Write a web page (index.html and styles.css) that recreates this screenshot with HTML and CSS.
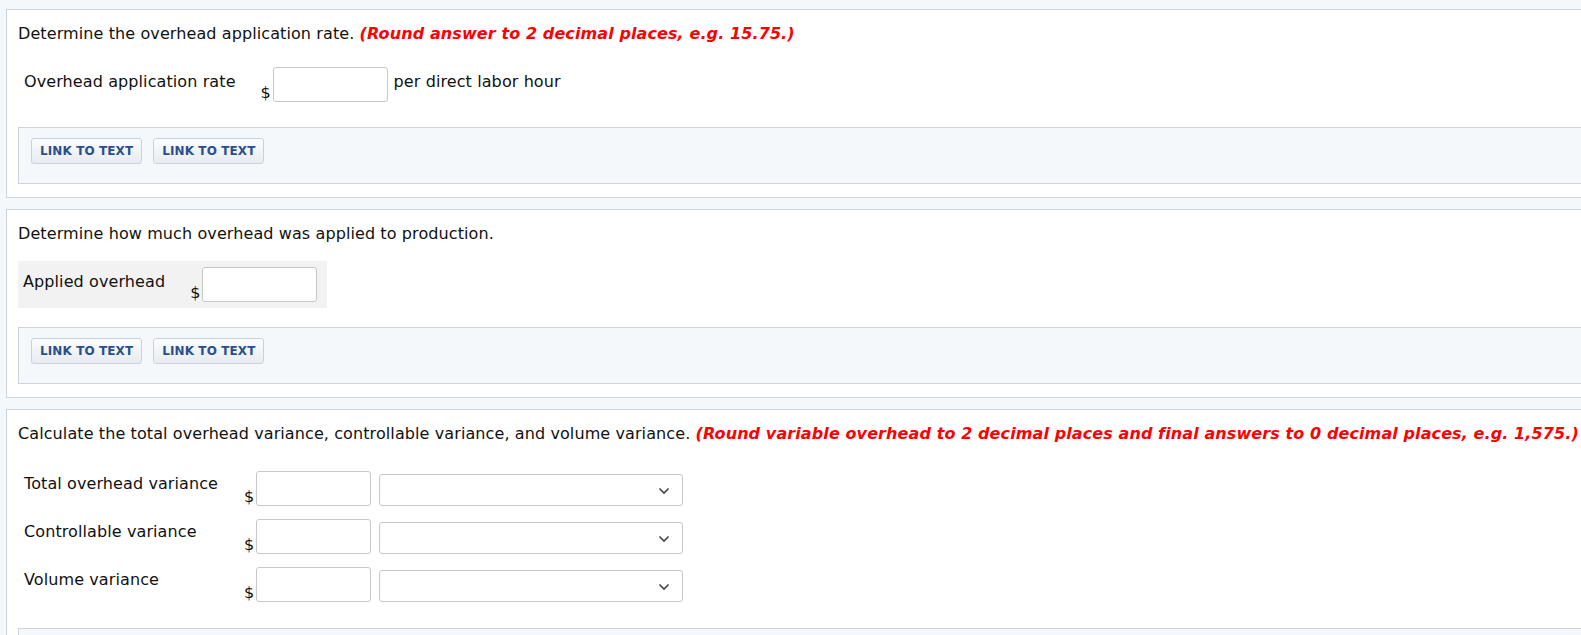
FILE: index.html
```html
<!DOCTYPE html>
<html lang="en">
<head>
    <meta charset="UTF-8">
    <title>Overhead Variance</title>
    <link rel="stylesheet" href="styles.css">
</head>
<body>

    <div class="panel">
        <div class="question">Determine the overhead application rate. <span class="hint">(Round answer to 2 decimal places, e.g. 15.75.)</span></div>
        <div class="answerRow">
            <span class="label">Overhead application rate</span>
            <span class="dollar">$</span>
            <input class="amount" type="text">
            <span class="unit">per direct labor hour</span>
        </div>
        <div class="links">
            <button class="linkButton">LINK TO TEXT</button>
            <button class="linkButton">LINK TO TEXT</button>
        </div>
    </div>

    <div class="panel">
        <div class="question">Determine how much overhead was applied to production.</div>
        <div class="answerRow shaded">
            <span class="label">Applied overhead</span>
            <span class="dollar">$</span>
            <input class="amount" type="text">
        </div>
        <div class="links">
            <button class="linkButton">LINK TO TEXT</button>
            <button class="linkButton">LINK TO TEXT</button>
        </div>
    </div>

    <div class="panel">
        <div class="question">Calculate the total overhead variance, controllable variance, and volume variance. <span class="hint">(Round variable overhead to 2 decimal places and final answers to 0 decimal places, e.g. 1,575.)</span></div>
        <div class="varianceGrid">
            <span class="label">Total overhead variance</span>
            <span class="dollar">$</span>
            <input class="amount" type="text">
            <div class="selectBox">
                <select><option></option><option>Favorable</option><option>Unfavorable</option></select>
                <svg class="chevron" width="12" height="8" viewBox="0 0 12 8"><path d="M1.5 1.5 L6 6 L10.5 1.5" fill="none" stroke="#444" stroke-width="1.6"/></svg>
            </div>

            <span class="label">Controllable variance</span>
            <span class="dollar">$</span>
            <input class="amount" type="text">
            <div class="selectBox">
                <select><option></option><option>Favorable</option><option>Unfavorable</option></select>
                <svg class="chevron" width="12" height="8" viewBox="0 0 12 8"><path d="M1.5 1.5 L6 6 L10.5 1.5" fill="none" stroke="#444" stroke-width="1.6"/></svg>
            </div>

            <span class="label">Volume variance</span>
            <span class="dollar">$</span>
            <input class="amount" type="text">
            <div class="selectBox">
                <select><option></option><option>Favorable</option><option>Unfavorable</option></select>
                <svg class="chevron" width="12" height="8" viewBox="0 0 12 8"><path d="M1.5 1.5 L6 6 L10.5 1.5" fill="none" stroke="#444" stroke-width="1.6"/></svg>
            </div>
        </div>
        <div class="links">
            <button class="linkButton">LINK TO TEXT</button>
            <button class="linkButton">LINK TO TEXT</button>
        </div>
    </div>

</body>
</html>
```

FILE: styles.css
```css
html, body {
    overflow: hidden;
}
body {
    font-family: "DejaVu Sans", Verdana, sans-serif;
    font-size: 16px;
    line-height: 19px;
    letter-spacing: 0.1px;
    color: #111;
    background-color: #f5f8fb;
    margin: 0;
    padding: 9px 0 0 6px;
}
.panel {
    background-color: #fff;
    border: 1px solid #ccd4df;
    margin: 0 -40px 11px 0;
    padding: 14px 0 13px 11px;
}
.question {
    white-space: nowrap;
}
.hint {
    color: #ff0000;
    font-weight: bold;
    font-style: italic;
    letter-spacing: 0.1px;
}
.answerRow {
    display: inline-flex;
    align-items: flex-start;
    margin-top: 18px;
    padding: 6px 10px 6px 6px;
}
.answerRow.shaded {
    background-color: #f2f2f2;
    padding-left: 5px;
}
.label {
    padding-top: 5px;
    padding-right: 25px;
}
.dollar {
    align-self: flex-end;
    width: 12px;
}
.amount {
    width: 115px;
    height: 35px;
    box-sizing: border-box;
    border: 1px solid #c8c8c8;
    border-radius: 3px;
    margin: 0;
    font-family: inherit;
    font-size: 16px;
}
.unit {
    padding-top: 5px;
    padding-left: 6px;
}
.varianceGrid {
    display: grid;
    grid-template-columns: auto 12px 115px 312px;
    grid-auto-rows: 35px;
    row-gap: 13px;
    align-items: start;
    justify-content: start;
    margin-top: 28px;
    padding-left: 6px;
}
.varianceGrid .label {
    padding-top: 3px;
    padding-right: 26px;
}
.selectBox {
    position: relative;
    align-self: end;
    margin-left: 8px;
    height: 32px;
}
.selectBox select {
    appearance: none;
    -webkit-appearance: none;
    width: 304px;
    height: 32px;
    border: 1px solid #c8c8c8;
    border-radius: 3px;
    background-color: #fff;
    font-family: inherit;
    font-size: 14px;
}
.chevron {
    position: absolute;
    right: 13px;
    top: 13px;
}
.links {
    background-color: #f5f8fb;
    border: 1px solid #ccd4df;
    margin-top: 19px;
    padding: 10px 12px 19px;
    display: flex;
    gap: 11px;
}
.varianceGrid + .links {
    margin-top: 26px;
}
.linkButton {
    height: 26px;
    padding: 0 8px;
    font-family: "DejaVu Sans", Verdana, sans-serif;
    font-size: 12px;
    font-weight: bold;
    letter-spacing: 0.1px;
    color: #2a4f8c;
    background: linear-gradient(#fbfcfd, #e7ecf1);
    border: 1px solid #c9d2dc;
    border-radius: 3px;
}
```
